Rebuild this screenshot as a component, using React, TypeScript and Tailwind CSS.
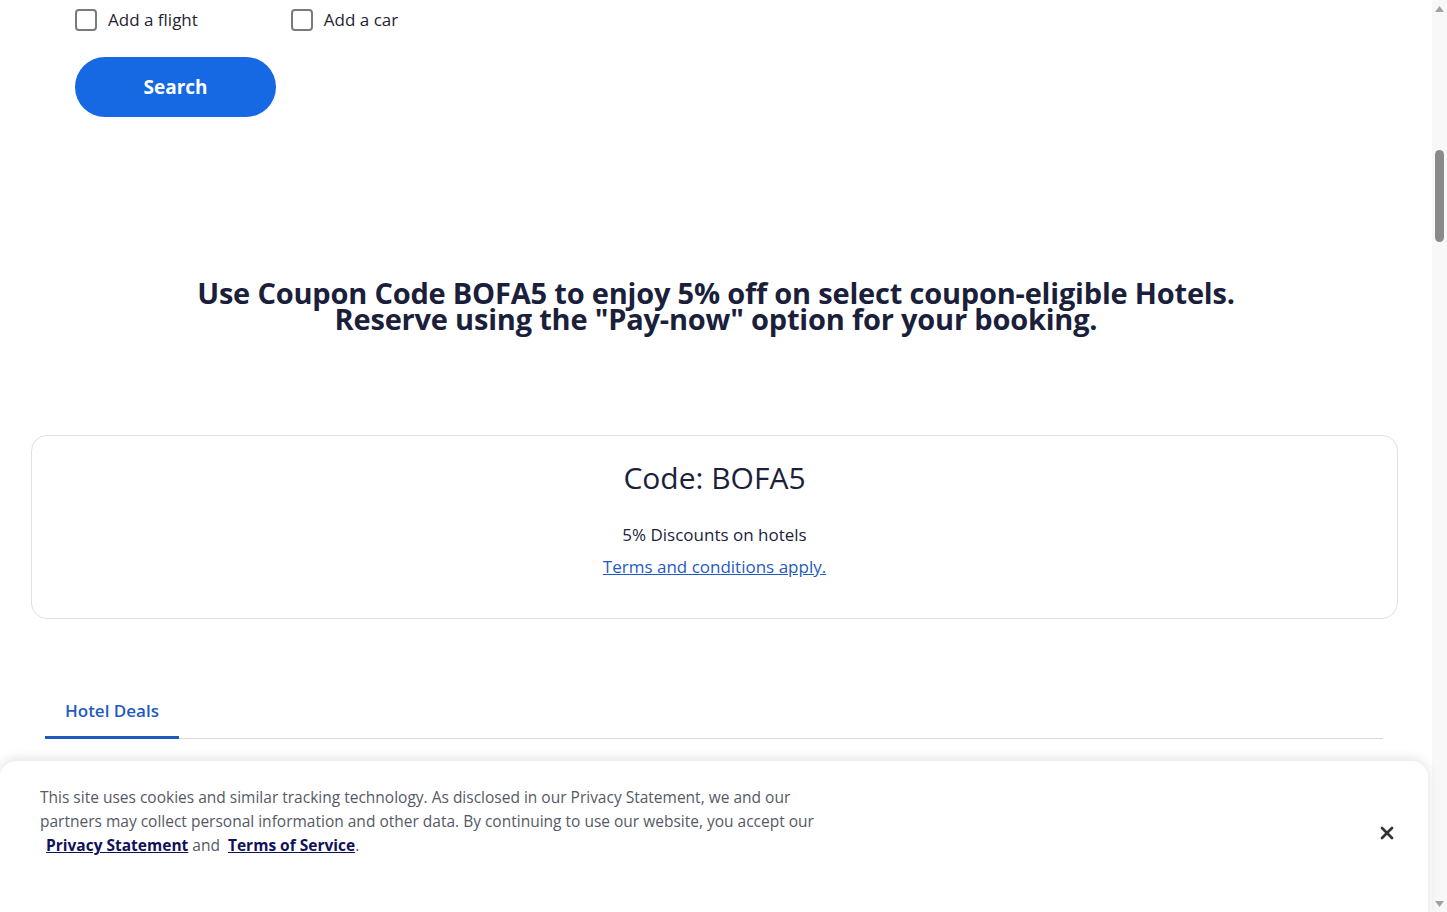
import { X } from 'lucide-react';

const font = { fontFamily: '"Open Sans", "Liberation Sans", sans-serif' };

function Checkbox({ label }: { label: string }) {
  return (
    <label className="flex items-center gap-[11px] text-[17px] text-[#1f2430]">
      <span className="w-[22px] h-[22px] rounded-[4px] border-2 border-[#7a7a7a] bg-white" />
      {label}
    </label>
  );
}

function Scrollbar() {
  return (
    <div className="w-[15px] h-full bg-[#f8f8f8] flex flex-col items-center">
      <div className="h-[17px] flex items-center justify-center">
        <svg width="9" height="6" viewBox="0 0 9 6"><path d="M0 6 L4.5 0 L9 6 Z" fill="#a3a3a3" /></svg>
      </div>
      <div className="h-[133px]" />
      <div className="w-[9px] h-[92px] rounded-full bg-[#8a8a8a]" />
      <div className="flex-1" />
      <div className="h-[17px] flex items-center justify-center">
        <svg width="9" height="6" viewBox="0 0 9 6"><path d="M0 0 L4.5 6 L9 0 Z" fill="#a3a3a3" /></svg>
      </div>
    </div>
  );
}

export default function App() {
  return (
    <div className="flex h-[912px] w-full overflow-hidden bg-white" style={font}>
      <div className="relative flex-1 flex flex-col">
        {/* Search options */}
        <div className="pl-[75px] pt-[9px] flex flex-col">
          <div className="flex items-center gap-[93px] h-[22px]">
            <Checkbox label="Add a flight" />
            <Checkbox label="Add a car" />
          </div>
          <button className="mt-[26px] w-[201px] h-[60px] rounded-full bg-[#1668e3] text-white text-[19px] font-bold">
            Search
          </button>
        </div>

        {/* Coupon headline */}
        <h2 className="mt-[163px] text-center text-[#1b1f3b] text-[29px] font-bold leading-[26px] tracking-[-0.2px]">
          Use Coupon Code BOFA5 to enjoy 5% off on select coupon-eligible Hotels.
          <br />
          Reserve using the "Pay-now" option for your booking.
        </h2>

        {/* Code card */}
        <div className="mt-[103px] mx-[31px] mr-[34px] h-[184px] rounded-[16px] border border-[#dfe0e4] flex flex-col items-center pt-[24px]">
          <div className="text-[30px] text-[#1b1f3b] leading-[36px] font-medium">Code: BOFA5</div>
          <div className="mt-[26px] text-[17px] text-[#1b1f3b] font-medium">5% Discounts on hotels</div>
          <a href="#" className="mt-[6px] text-[17px] text-[#1f5bbf] underline">Terms and conditions apply.</a>
        </div>

        {/* Tabs */}
        <div className="mt-[79px] mx-[45px] mr-[49px] border-b border-[#d8d8dc] flex">
          <div className="px-[20px] pb-[12px] border-b-[3px] border-[#1f5bbf] -mb-px text-[17px] font-semibold text-[#1f5bbf]">
            Hotel Deals
          </div>
        </div>

        {/* Cookie banner */}
        <div className="absolute left-0 right-[4px] top-[761px] h-[170px] bg-white rounded-t-[16px] shadow-[0_-2px_12px_rgba(0,0,0,0.12)] flex items-start justify-between pl-[40px] pr-[31px] pt-[24px]">
          <p className="w-[800px] text-[15.5px] leading-[24px] text-[#555a66]">
            This site uses cookies and similar tracking technology. As disclosed in our Privacy Statement, we and our
            partners may collect personal information and other data. By continuing to use our website, you accept our
            <br />
            <a href="#" className="ml-[6px] font-bold text-[#11115a] underline">Privacy Statement</a> and{' '}
            <a href="#" className="ml-[4px] font-bold text-[#11115a] underline">Terms of Service</a>.
          </p>
          <button className="mt-[38px] text-[#333]">
            <X className="w-[20px] h-[20px]" strokeWidth={3.2} />
          </button>
        </div>
      </div>
      <Scrollbar />
    </div>
  );
}
